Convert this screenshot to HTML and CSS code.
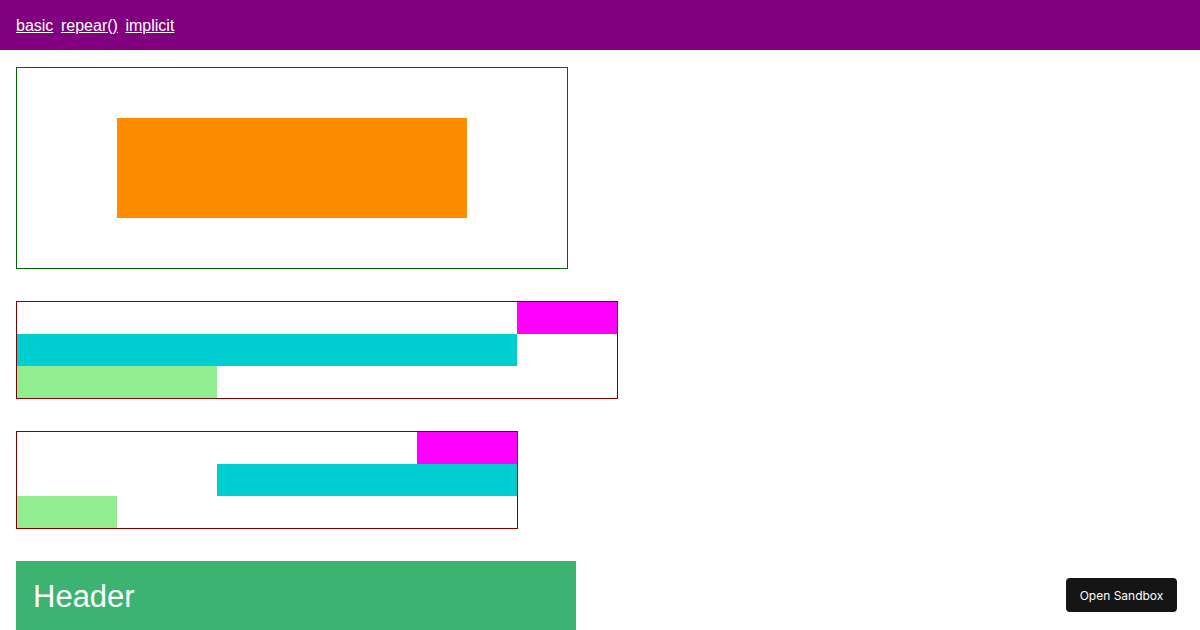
FILE: index.html
```html
<!DOCTYPE html>
<html>
<head>
<meta charset="utf-8">
<link rel="stylesheet" href="styles.css">
</head>
<body>
<nav class="nav">
  <a href="#">basic</a>
  <a href="#">repear()</a>
  <a href="#">implicit</a>
</nav>
<main class="main">
  <div class="grid-basic">
    <div class="orange"></div>
  </div>
  <div class="grid-repeat">
    <div class="magenta m1"></div>
    <div class="cyan c1"></div>
    <div class="lgreen g1"></div>
  </div>
  <div class="grid-implicit">
    <div class="magenta m2"></div>
    <div class="cyan c2"></div>
    <div class="lgreen g2"></div>
  </div>
  <div class="header-block">
    <h1>Header</h1>
  </div>
</main>
<button class="sandbox">Open Sandbox</button>
</body>
</html>
```

FILE: styles.css
```css
html, body {
  margin: 0;
  padding: 0;
  font-family: "Liberation Sans", Arial, sans-serif;
  background: #fff;
  overflow: hidden;
}
.nav {
  background: #800080;
  height: 50px;
  display: flex;
  align-items: center;
  gap: 7.6px;
  padding: 0 16px;
  box-sizing: border-box;
}
.nav a {
  color: #fff;
  font-size: 16px;
  text-decoration: underline;
  position: relative;
  top: 1px;
}
.main {
  padding: 17px 16px 0;
  display: flex;
  flex-direction: column;
  align-items: flex-start;
  gap: 32px;
}
.grid-basic {
  border: 1px solid #006400;
  display: grid;
  grid-template-columns: 100px 350px 100px;
  grid-template-rows: 50px 100px 50px;
}
.orange {
  background: #ff8c00;
  grid-column: 2;
  grid-row: 2;
}
.grid-repeat {
  border: 1px solid #800000;
  display: grid;
  grid-template-columns: repeat(6, 100px);
  grid-template-rows: repeat(3, 32px);
}
.grid-implicit {
  border: 1px solid #800000;
  display: grid;
  grid-template-columns: repeat(5, 100px);
  grid-auto-rows: 32px;
}
.magenta { background: #ff00ff; }
.cyan { background: #00ced1; }
.lgreen { background: #90ee90; }
.m1 { grid-column: 6; grid-row: 1; }
.c1 { grid-column: 1 / 6; grid-row: 2; }
.g1 { grid-column: 1 / 3; grid-row: 3; }
.m2 { grid-column: 5; grid-row: 1; }
.c2 { grid-column: 3 / 6; grid-row: 2; }
.g2 { grid-column: 1; grid-row: 3; }
.header-block {
  background: #3cb371;
  width: 560px;
  padding: 16px;
  box-sizing: border-box;
  height: 100px;
}
.header-block h1 {
  margin: 0;
  padding-left: 1px;
  font-size: 31px;
  font-weight: normal;
  color: #fff;
  line-height: 39px;
}
.sandbox {
  position: fixed;
  right: 23px;
  bottom: 18px;
  width: 111px;
  height: 34px;
  background: #151515;
  color: #fff;
  border: none;
  border-radius: 4px;
  font-family: Inter, "Liberation Sans", sans-serif;
  font-size: 12px;
  padding: 0;
}
```
